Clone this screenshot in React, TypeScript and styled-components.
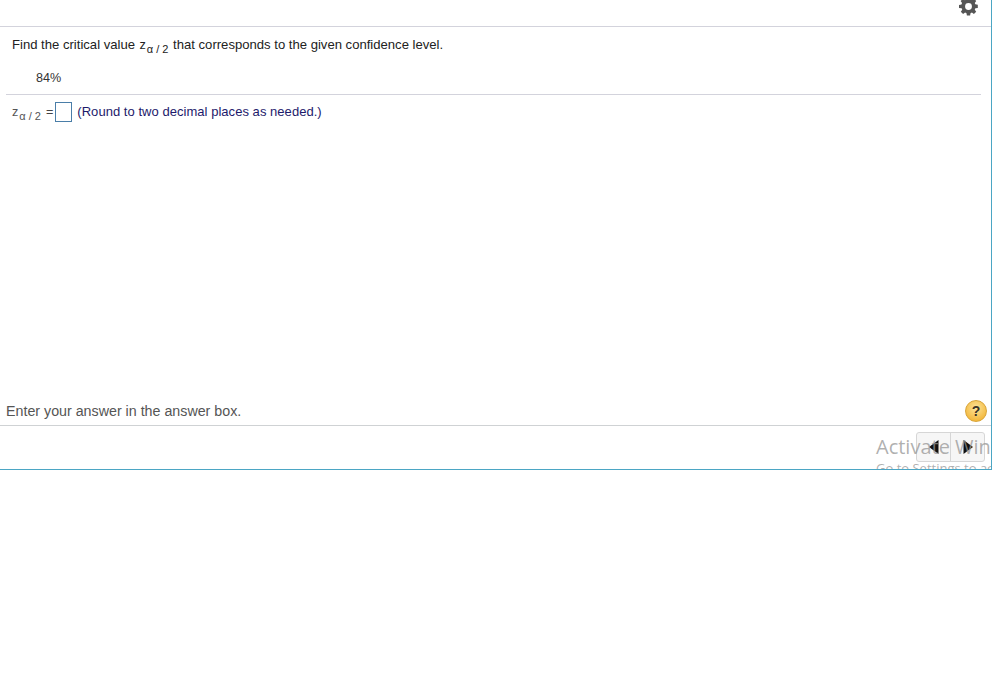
import React from 'react';
import styled, { createGlobalStyle } from 'styled-components';

const GlobalStyle = createGlobalStyle`
  html, body {
    margin: 0;
    padding: 0;
    background: #fff;
    font-family: "Liberation Sans", Arial, sans-serif;
  }
`;

const Frame = styled.div`
  position: relative;
  width: 991px;
  height: 469px;
  border-right: 1px solid #4ba6c4;
  border-bottom: 1px solid #4ba6c4;
  display: flex;
  flex-direction: column;
  overflow: hidden;
`;

const TopBar = styled.div`
  height: 26px;
  flex: none;
  border-bottom: 1px solid #d3d3dc;
  display: flex;
  justify-content: flex-end;
  padding-right: 13px;
  overflow: hidden;
`;

const GearWrap = styled.div`
  margin-top: -3px;
  width: 19px;
  height: 19px;
`;

const Question = styled.div`
  flex: 1;
  padding: 9px 10px 0 6px;
  font-size: 12.6px;
  color: #222;
`;

const Prompt = styled.div`
  padding-left: 6px;
  height: 17px;
  line-height: 17px;
  font-size: 13.1px;
  white-space: nowrap;
`;

const Value = styled.div`
  padding: 17px 0 0 30px;
  height: 17px;
  line-height: 17px;
  color: #333;
`;

const AnswerRow = styled.div`
  margin-top: 7px;
  border-top: 1px solid #d3d3dc;
  padding: 7px 0 0 6px;
  display: flex;
  align-items: center;
  height: 20px;
  white-space: nowrap;
`;

const Var = styled.span`
  font-size: 12.6px;
  margin-left: ${(props: { $inline?: boolean }) => (props.$inline ? '1px' : '0')};
  color: ${(props: { $inline?: boolean }) => (props.$inline ? '#222' : '#555')};
`;

const Sub = styled.sub`
  font-size: 11px;
  line-height: 0;
  vertical-align: -4px;
  margin: 0 1px;
`;

const Equals = styled.span`
  margin-left: 4px;
  color: #444;
`;

const AnswerBox = styled.div`
  width: 17px;
  height: 20px;
  box-sizing: border-box;
  border: 1px solid #4a7ea8;
  margin: 0 5px 0 2px;
  background: #fff;
`;

const Hint = styled.span`
  color: #1d1a6b;
  font-size: 13px;
  letter-spacing: 0.04px;
  margin-top: -2px;
`;

const StatusBar = styled.div`
  flex: none;
  height: 30px;
  box-sizing: border-box;
  border-bottom: 1px solid #cfd2d4;
  display: flex;
  align-items: center;
  justify-content: space-between;
  padding: 0 4px 0 6px;
  font-size: 14.25px;
  color: #555;
`;

const HelpButton = styled.div`
  width: 22px;
  height: 22px;
  border-radius: 50%;
  border: 1px solid #d9a53a;
  box-sizing: border-box;
  background: radial-gradient(circle at 50% 35%, #fde49a, #f3b93f 75%);
  display: flex;
  align-items: center;
  justify-content: center;
  font-size: 14px;
  font-weight: bold;
  color: #3c3325;
`;

const Footer = styled.div`
  flex: none;
  height: 43px;
  box-sizing: border-box;
  display: flex;
  justify-content: flex-end;
  align-items: flex-start;
  padding: 6px 6px 0 0;
`;

const NavGroup = styled.div`
  display: flex;
  height: 30px;
  box-sizing: border-box;
  border: 1px solid #d6d6d6;
  border-radius: 3px;
  background: #f6f6f6;
`;

const NavButton = styled.div`
  width: 33px;
  display: flex;
  align-items: center;
  justify-content: center;
  & + & {
    border-left: 1px solid #d6d6d6;
  }
`;

const Watermark = styled.div`
  position: absolute;
  left: 876px;
  top: 434px;
  width: 130px;
  white-space: nowrap;
  color: rgba(150, 150, 150, 0.75);
  pointer-events: none;
`;

const WatermarkTitle = styled.div`
  font-size: 20px;
  line-height: 26px;
  font-family: "Open Sans", "Liberation Sans", sans-serif;
`;

const WatermarkSub = styled.div`
  font-size: 13px;
  line-height: 16px;
  font-family: "Open Sans", "Liberation Sans", sans-serif;
`;

const Gear = () => (
  <svg width="19" height="19" viewBox="0 0 20 20" fill="#555">
    <path
      fillRule="evenodd"
      d="M8.3 0h3.4l.4 2.6 1.5.6 2.1-1.5 2.4 2.4-1.5 2.1.6 1.5 2.6.4v3.4l-2.6.4-.6 1.5 1.5 2.1-2.4 2.4-2.1-1.5-1.5.6-.4 2.6H8.3l-.4-2.6-1.5-.6-2.1 1.5-2.4-2.4 1.5-2.1-.6-1.5L0 11.7V8.3l2.6-.4.6-1.5-1.5-2.1 2.4-2.4 2.1 1.5 1.5-.6zM10 6.4a3.6 3.6 0 1 0 0 7.2 3.6 3.6 0 0 0 0-7.2z"
    />
  </svg>
);

const Arrow = ({ left }: { left?: boolean }) => (
  <svg width="10" height="14" viewBox="0 0 10 14">
    <path d={left ? 'M9.5 0v14L0 7z' : 'M.5 0v14L10 7z'} fill="#111" />
  </svg>
);

const App = () => {
  return (
    <>
      <GlobalStyle />
      <Frame>
        <TopBar>
          <GearWrap>
            <Gear />
          </GearWrap>
        </TopBar>
        <Question>
          <Prompt>
            Find the critical value
            <Var $inline>
              {' '}z<Sub>α / 2</Sub>
            </Var>{' '}
            that corresponds to the given confidence level.
          </Prompt>
          <Value>84%</Value>
          <AnswerRow>
            <Var>
              z<Sub>α / 2</Sub>
            </Var>
            <Equals>=</Equals>
            <AnswerBox />
            <Hint>(Round to two decimal places as needed.)</Hint>
          </AnswerRow>
        </Question>
        <StatusBar>
          <span>Enter your answer in the answer box.</span>
          <HelpButton>?</HelpButton>
        </StatusBar>
        <Footer>
          <NavGroup>
            <NavButton>
              <Arrow left />
            </NavButton>
            <NavButton>
              <Arrow />
            </NavButton>
          </NavGroup>
        </Footer>
        <Watermark>
          <WatermarkTitle>Activate Windows</WatermarkTitle>
          <WatermarkSub>Go to Settings to activate Windows.</WatermarkSub>
        </Watermark>
      </Frame>
    </>
  );
};

export default App;
